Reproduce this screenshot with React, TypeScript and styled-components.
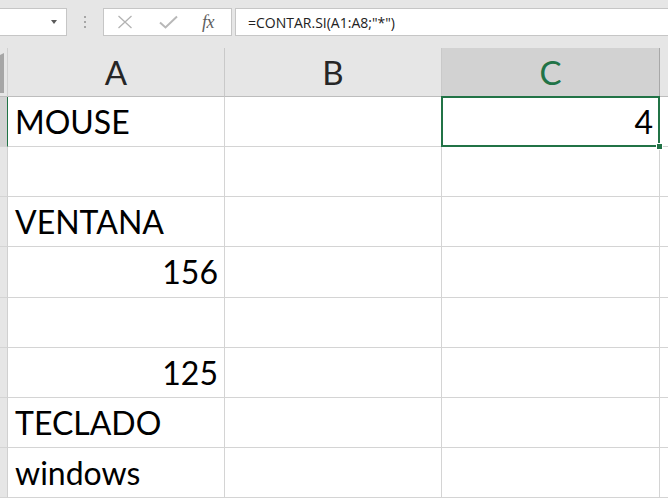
import React from "react";
import styled, { createGlobalStyle, css } from "styled-components";

const GlobalStyle = createGlobalStyle`
  html, body {
    margin: 0;
    padding: 0;
    background: #ffffff;
    overflow: hidden;
  }
`;

const CELL_FONT = `Lato, "Open Sans", sans-serif`;

const columns = [
  { key: "A", width: 217 },
  { key: "B", width: 217 },
  { key: "C", width: 218 },
];

type CellData = { text?: string; align?: "left" | "right" };

const rows: CellData[][] = [
  [{ text: "MOUSE" }, {}, { text: "4", align: "right" }],
  [{}, {}, {}],
  [{ text: "VENTANA" }, {}, {}],
  [{ text: "156", align: "right" }, {}, {}],
  [{}, {}, {}],
  [{ text: "125", align: "right" }, {}, {}],
  [{ text: "TECLADO" }, {}, {}],
  [{ text: "windows" }, {}, {}],
];

const Page = styled.div`
  width: 668px;
  height: 501px;
  overflow: hidden;
  display: flex;
  flex-direction: column;
  background: #ffffff;
`;

const FormulaBar = styled.div`
  height: 48px;
  flex-shrink: 0;
  display: flex;
  align-items: flex-start;
  padding-top: 8px;
  box-sizing: border-box;
  background: #e6e6e6;
`;

const NameBox = styled.div`
  width: 67px;
  height: 28px;
  box-sizing: border-box;
  background: #ffffff;
  border: 1px solid #c6c6c6;
  border-left: none;
  display: flex;
  align-items: center;
  justify-content: flex-end;
  padding-right: 9px;
`;

const Caret = styled.span`
  width: 0;
  height: 0;
  border-left: 3px solid transparent;
  border-right: 3px solid transparent;
  border-top: 4px solid #5a5a5a;
`;

const Grip = styled.div`
  width: 36px;
  height: 28px;
  display: flex;
  flex-direction: column;
  align-items: center;
  justify-content: center;
  gap: 3px;

  span {
    width: 2px;
    height: 2px;
    background: #a6a6a6;
  }
`;

const FnButtons = styled.div`
  width: 129px;
  height: 28px;
  box-sizing: border-box;
  background: #ffffff;
  border: 1px solid #c6c6c6;
  display: flex;
  align-items: center;
  padding-left: 13px;
`;

const IconSlot = styled.div<{ $w: number }>`
  width: ${(p) => p.$w}px;
  height: 26px;
  display: flex;
  align-items: center;
  justify-content: flex-start;
`;

const Fx = styled.span`
  font-family: "Liberation Serif", "DejaVu Serif", serif;
  font-style: italic;
  font-size: 18px;
  color: #5f5f5f;
  letter-spacing: -0.5px;
  line-height: 1;
`;

const FormulaInput = styled.div`
  flex: 1;
  height: 28px;
  margin-left: 3px;
  box-sizing: border-box;
  background: #ffffff;
  border: 1px solid #c6c6c6;
  border-right: none;
  display: flex;
  align-items: center;
  padding-left: 12px;
  font-family: "Open Sans", "Liberation Sans", sans-serif;
  font-size: 14px;
  color: #222222;
  white-space: nowrap;
`;

const Sheet = styled.div`
  display: grid;
  grid-template-columns: 8px ${columns.map((c) => `${c.width}px`).join(" ")} 1fr;
  grid-template-rows: 49px repeat(${rows.length}, 50.15px);
  font-family: ${CELL_FONT};
`;

const Corner = styled.div`
  background: #e6e6e6;
  border-right: 1px solid #d0d0d0;
  border-bottom: 1px solid #bdbdbd;

  svg {
    display: block;
  }
`;

const ColHeader = styled.div<{ $active?: boolean; $last?: boolean }>`
  background: ${(p) => (p.$active ? "#d2d2d2" : "#e6e6e6")};
  color: ${(p) => (p.$active ? "#217346" : "#262626")};
  border-right: 1px solid ${(p) => (p.$active ? "#a8a8a8" : "#c9c9c9")};
  border-bottom: 1px solid #bdbdbd;
  font-size: 33px;
  line-height: 48px;
  text-align: center;
  ${(p) =>
    p.$last &&
    css`
      border-right: none;
    `}
`;

const RowHeader = styled.div<{ $active?: boolean }>`
  background: ${(p) => (p.$active ? "#d2d2d2" : "#e6e6e6")};
  border-right: 1px solid ${(p) => (p.$active ? "#217346" : "#d0d0d0")};
  border-bottom: 1px solid #d4d4d4;
`;

const Cell = styled.div<{ $align?: "left" | "right"; $selected?: boolean }>`
  position: relative;
  border-right: 1px solid #d4d4d4;
  border-bottom: 1px solid #d4d4d4;
  padding: 0 6px 0 7px;
  font-size: 32px;
  line-height: 50px;
  color: #000000;
  text-align: ${(p) => p.$align ?? "left"};
  white-space: nowrap;

  ${(p) =>
    p.$selected &&
    css`
      &::after {
        content: "";
        position: absolute;
        left: -1px;
        top: -1px;
        right: -1px;
        bottom: -1px;
        border: 2px solid #217346;
        pointer-events: none;
      }
      &::before {
        content: "";
        position: absolute;
        right: -4px;
        bottom: -4px;
        width: 5px;
        height: 5px;
        background: #217346;
        border: 1px solid #ffffff;
        z-index: 2;
      }
    `}
`;

const FillerCell = styled.div`
  border-bottom: 1px solid #d4d4d4;
`;

const CloseIcon = () => (
  <svg width="16" height="14" viewBox="0 0 16 14">
    <path d="M1.5 1 L14.5 13 M14.5 1 L1.5 13" stroke="#b3b3b3" strokeWidth="1.3" fill="none" />
  </svg>
);

const CheckIcon = () => (
  <svg width="19" height="14" viewBox="0 0 19 14">
    <path d="M1 7.5 L6.5 12.5 L18 1.5" stroke="#b8b8b8" strokeWidth="2" fill="none" />
  </svg>
);

export default function App() {
  return (
    <>
      <GlobalStyle />
      <Page>
        <FormulaBar>
          <NameBox>
            <Caret />
          </NameBox>
          <Grip>
            <span />
            <span />
            <span />
          </Grip>
          <FnButtons>
            <IconSlot $w={42}>
              <CloseIcon />
            </IconSlot>
            <IconSlot $w={43}>
              <CheckIcon />
            </IconSlot>
            <IconSlot $w={22}>
              <Fx>fx</Fx>
            </IconSlot>
          </FnButtons>
          <FormulaInput>=CONTAR.SI(A1:A8;"*")</FormulaInput>
        </FormulaBar>

        <Sheet>
          <Corner>
            <svg width="7" height="48" viewBox="0 0 7 48">
              <polygon points="0,7 4,5 4,45 0,45" fill="#a6a6a6" />
            </svg>
          </Corner>
          {columns.map((c) => (
            <ColHeader key={c.key} $active={c.key === "C"}>
              {c.key}
            </ColHeader>
          ))}
          <ColHeader $last />

          {rows.map((row, r) => (
            <React.Fragment key={r}>
              <RowHeader $active={r === 0} />
              {row.map((cell, c) => (
                <Cell key={c} $align={cell.align} $selected={r === 0 && c === 2}>
                  {cell.text}
                </Cell>
              ))}
              <FillerCell />
            </React.Fragment>
          ))}
        </Sheet>
      </Page>
    </>
  );
}
